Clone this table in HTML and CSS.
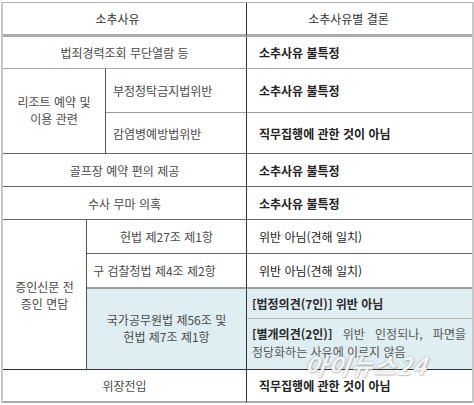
FILE: index.html
```html
<!DOCTYPE html>
<html lang="ko">
<head>
<meta charset="utf-8">
<title>소추사유별 결론</title>
<link rel="stylesheet" href="styles.css">
</head>
<body>
<div class="page">
  <div class="grid">
    <div class="cell head head-left span3 r1">소추사유</div>
    <div class="cell head head-right r1">소추사유별 결론</div>

    <div class="cell center span3 r2">법죄경력조회 무단열람 등</div>
    <div class="cell result bold r2">소추사유 불특정</div>

    <div class="cell center span2 inner resort">리조트 예약 및<br>이용 관련</div>
    <div class="cell left3 r3">부정청탁금지법위반</div>
    <div class="cell result bold r3">소추사유 불특정</div>
    <div class="cell left3 r4">감염병예방법위반</div>
    <div class="cell result bold r4">직무집행에 관한 것이 아님</div>

    <div class="cell center span3 r5">골프장 예약 편의 제공</div>
    <div class="cell result bold r5">소추사유 불특정</div>

    <div class="cell center span3 r6">수사 무마 의혹</div>
    <div class="cell result bold r6">소추사유 불특정</div>

    <div class="cell center inner witness">증인신문 전<br>증인 면담</div>
    <div class="cell center span23 r7">헌법 제27조 제1항</div>
    <div class="cell result r7">위반 아님(견해 일치)</div>
    <div class="cell left23 span23 r8">구 검찰청법 제4조 제2항</div>
    <div class="cell result r8">위반 아님(견해 일치)</div>
    <div class="cell center span23 blue law">국가공무원법 제56조 및<br>헌법 제7조 제1항</div>
    <div class="cell opinion blue bold r9">[법정의견(7인)] 위반 아님</div>
    <div class="cell opinion blue justify r10"><b>[별개의견(2인)]</b> <span>위반 인정되나, 파면을</span> <span>정당화하는 사유에 이르지 않음</span></div>

    <div class="cell center span3 r11">위장전입</div>
    <div class="cell result bold r11">직무집행에 관한 것이 아님</div>
  </div>
  <div class="watermark">아이뉴스24</div>
</div>
</body>
</html>
```

FILE: styles.css
```css
html, body {
  margin: 0;
  padding: 0;
  background: #ffffff;
}

.page {
  position: relative;
  width: 474px;
  height: 405px;
  font-family: "Noto Sans CJK KR", "Noto Sans", sans-serif;
  font-size: 12px;
  line-height: 17px;
  color: #4a4a4a;
}

.grid {
  margin: 2px 0 0 1px;
  width: 473px;
  box-sizing: border-box;
  display: grid;
  grid-template-columns: 84px 19px 141px 225px;
  grid-template-rows: 34px 32px 44px 41px 33px 33px 34px 35px 30px 51px 33px;
  border-top: 1px solid #b4b4b4;
  border-left: 2px solid #c8c8c8;
  border-right: 2px solid #c8c8c8;
}

.cell {
  box-sizing: border-box;
  display: flex;
  align-items: center;
  border-bottom: 1px solid #666666;
  word-break: keep-all;
}

.center {
  justify-content: center;
  text-align: center;
}

.span3 { grid-column: 1 / 4; border-right: 1px solid #333333; }
.span2 { grid-column: 1 / 3; }
.span23 { grid-column: 2 / 4; border-right: 1px solid #333333; }
.inner { border-right: 1px solid #555555; }

.r1 { grid-row: 1; }
.r2 { grid-row: 2; }
.r3 { grid-row: 3; }
.r4 { grid-row: 4; }
.r5 { grid-row: 5; }
.r6 { grid-row: 6; }
.r7 { grid-row: 7; }
.r8 { grid-row: 8; }
.r9 { grid-row: 9; }
.r10 { grid-row: 10; }
.r11 { grid-row: 11; }

.head {
  color: #333333;
  border-bottom: 3px solid #ababab;
}
.head-left {
  justify-content: center;
  padding-right: 14px;
}
.head-right {
  justify-content: center;
  padding-right: 22px;
}

.r2 { border-bottom: 1px solid #a8a8a8; }
.r3 { border-bottom: 1px solid #9a9a9a; }

.resort {
  grid-row: 3 / 5;
  grid-column: 1 / 3;
  padding-top: 2px;
  padding-bottom: 4px;
}

.left3 {
  grid-column: 3;
  padding-left: 7px;
  border-right: 1px solid #333333;
}

.witness {
  grid-row: 7 / 11;
  grid-column: 1;
  border-bottom-color: #333333;
}

.left23 {
  padding-left: 6px;
}

.r8 { border-bottom: 2px solid #9c9c9c; }
.r9 { border-bottom: 1px solid #b8b8b8; }
.r10 { border-bottom: 1px solid #333333; }
.r11 { border-bottom: 2px solid #aaaaaa; }

.law {
  grid-row: 9 / 11;
  border-bottom: 1px solid #333333;
  padding-bottom: 2px;
}

.blue {
  background: #dfeef2;
}

.result {
  grid-column: 4;
  padding-left: 12px;
  color: #222222;
}

.opinion {
  grid-column: 4;
  padding-left: 5px;
  padding-right: 6px;
  color: #555555;
}

.bold {
  font-weight: bold;
  color: #222222;
}

.opinion.bold { color: #2a2a2a; }

.opinion b {
  color: #2a2a2a;
}

.justify {
  display: block;
  text-align: justify;
  line-height: 18px;
  padding-top: 6px;
}

.watermark {
  position: absolute;
  left: 305px;
  top: 348px;
  font-size: 24px;
  line-height: 30px;
  font-weight: bold;
  font-style: italic;
  letter-spacing: 1px;
  color: rgba(255, 255, 255, 0.92);
  text-shadow: 0 0 2px rgba(0, 0, 0, 0.35), 1px 1px 1px rgba(0, 0, 0, 0.15);
  transform: skewX(-8deg);
}
```
